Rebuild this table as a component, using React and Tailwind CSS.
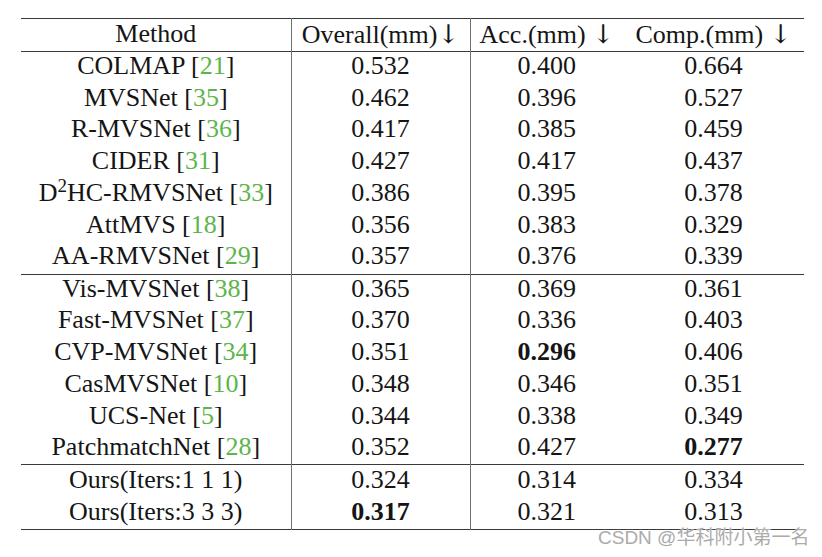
import React from 'react';

const groups = [
  [
    ['COLMAP', '21', '0.532', '0.400', '0.664'],
    ['MVSNet', '35', '0.462', '0.396', '0.527'],
    ['R-MVSNet', '36', '0.417', '0.385', '0.459'],
    ['CIDER', '31', '0.427', '0.417', '0.437'],
    ['D2HC-RMVSNet', '33', '0.386', '0.395', '0.378'],
    ['AttMVS', '18', '0.356', '0.383', '0.329'],
    ['AA-RMVSNet', '29', '0.357', '0.376', '0.339'],
  ],
  [
    ['Vis-MVSNet', '38', '0.365', '0.369', '0.361'],
    ['Fast-MVSNet', '37', '0.370', '0.336', '0.403'],
    ['CVP-MVSNet', '34', '0.351', '*0.296', '0.406'],
    ['CasMVSNet', '10', '0.348', '0.346', '0.351'],
    ['UCS-Net', '5', '0.344', '0.338', '0.349'],
    ['PatchmatchNet', '28', '0.352', '0.427', '*0.277'],
  ],
  [
    ['Ours(Iters:1 1 1)', null, '0.324', '0.314', '0.334'],
    ['Ours(Iters:3 3 3)', null, '*0.317', '0.321', '0.313'],
  ],
];

function Num({ v }) {
  if (v.startsWith('*')) return <span className="font-bold">{v.slice(1)}</span>;
  return <span>{v}</span>;
}

function Arrow() {
  return (
    <span className="text-[#151515]" style={{ fontFamily: '"DejaVu Serif", serif' }}>
      ↓
    </span>
  );
}

function MethodName({ name, cite }) {
  let label = name;
  if (name === 'D2HC-RMVSNet') {
    label = (
      <>
        D<span className="text-[19px] align-baseline relative -top-[9px]">2</span>HC-RMVSNet
      </>
    );
  }
  return (
    <>
      {label}
      {cite && (
        <>
          {' '}[<span className="text-[#5cb54a]">{cite}</span>]
        </>
      )}
    </>
  );
}

export default function App() {
  return (
    <div className="relative w-[822px] h-[557px] bg-white text-[#151515]" style={{ fontFamily: '"Liberation Serif", "Times New Roman", serif' }}>
      <div className="pt-[18px] pl-[21px]">
        <table className="border-collapse text-[26px] leading-none text-center">
          <colgroup>
            <col className="w-[270px]" />
            <col className="w-[179px]" />
            <col className="w-[153px]" />
            <col className="w-[181px]" />
          </colgroup>
          <thead>
            <tr className="h-[33px] border-t border-b border-[#3a3a3a]">
              <th className="font-normal pb-[2px] border-r-[1.5px] border-r-[#707070]">Method</th>
              <th className="font-normal pb-[2px] border-r-[1.5px] border-r-[#707070]">
                Overall(mm)<Arrow />
              </th>
              <th className="font-normal pb-[2px]">
                Acc.(mm) <Arrow />
              </th>
              <th className="font-normal pb-[2px]">
                Comp.(mm) <Arrow />
              </th>
            </tr>
          </thead>
          {groups.map((rows, gi) => (
            <tbody key={gi} className="border-b border-[#3a3a3a]">
              {rows.map((r) => (
                <tr key={r[0]} className={gi === 2 ? 'h-[32.5px]' : 'h-[31.8px]'}>
                  <td className="pb-[3px] border-r-[1.5px] border-r-[#707070]">
                    <MethodName name={r[0]} cite={r[1]} />
                  </td>
                  <td className="pb-[3px] border-r-[1.5px] border-r-[#707070]"><Num v={r[2]} /></td>
                  <td className="pb-[3px]"><Num v={r[3]} /></td>
                  <td className="pb-[3px]"><Num v={r[4]} /></td>
                </tr>
              ))}
            </tbody>
          ))}
        </table>
      </div>
      <div
        className="absolute left-[598px] top-[528px] text-[19px] text-[#ababab] leading-none"
        style={{ fontFamily: '"Liberation Sans", "Noto Sans CJK SC", sans-serif', textShadow: '0 0 2px #fff' }}
      >
        CSDN @华科附小第一名
      </div>
    </div>
  );
}
